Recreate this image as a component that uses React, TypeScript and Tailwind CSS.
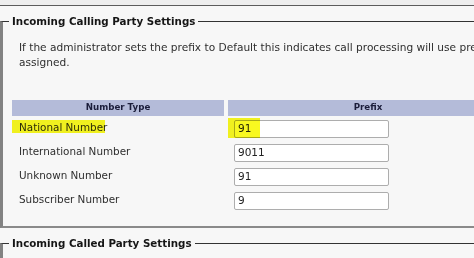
import React from "react";

const rows = [
  { label: "National Number", value: "91" },
  { label: "International Number", value: "9011" },
  { label: "Unknown Number", value: "91" },
  { label: "Subscriber Number", value: "9" },
];

function Legend({ children }: { children: React.ReactNode }) {
  return (
    <div className="absolute left-[6px] top-[-8px] bg-[#f7f7f7] px-[3px] text-[10.3px] font-bold leading-[15px] text-[#151515]">
      {children}
    </div>
  );
}

export default function App() {
  return (
    <div
      className="relative h-[258px] w-[474px] overflow-hidden bg-[#f7f7f7] text-[#2e2e2e]"
      style={{ fontFamily: '"DejaVu Sans", Verdana, sans-serif' }}
    >
      <div className="h-[5px] bg-[#eeeeee]" />
      <div className="h-px bg-[#5c5c5c]" />
      <div className="h-[15px]" />

      <section className="relative w-[560px] border-t border-l-[3px] border-b-2 border-t-[#333333] border-l-[#828282] border-b-[#8a8a8a] pb-[14px]">
        <Legend>Incoming Calling Party Settings</Legend>
        <div className="whitespace-nowrap pl-[16px] pt-[18px] text-[10.6px] leading-[15px]">
          If the administrator sets the prefix to Default this indicates call processing will use prefix
          <br />
          assigned.
        </div>

        <div className="ml-[9px] mt-[30px] flex gap-[4px]">
          <div className="flex h-[16px] w-[212px] items-center justify-center bg-[#b4bbd9] text-[8.7px] font-bold text-[#1b1d3a]">
            Number Type
          </div>
          <div className="flex h-[16px] w-[280px] items-center justify-center bg-[#b4bbd9] text-[8.7px] font-bold text-[#1b1d3a]">
            Prefix
          </div>
        </div>

        <div className="ml-[9px] flex flex-col">
          {rows.map((r) => (
            <div key={r.label} className="flex h-[24px] items-start gap-[4px] pt-[4px]">
              <div className="w-[212px] pl-[7px] text-[10.4px] leading-[15px]">{r.label}</div>
              <div className="w-[280px] pl-[6px]">
                <div className="flex h-[18px] w-[155px] items-center rounded-[2px] border border-[#adadad] bg-white pl-[3px] text-[10.5px] text-[#222]">
                  {r.value}
                </div>
              </div>
            </div>
          ))}
        </div>
      </section>

      <div className="h-[15px]" />
      <section className="relative h-[40px] w-[560px] border-t border-l-[3px] border-t-[#333333] border-l-[#828282]">
        <Legend>Incoming Called Party Settings</Legend>
      </section>

      {/* yellow marker highlights */}
      <div className="pointer-events-none absolute left-[12px] top-[120px] h-[13px] w-[93px] bg-[#f8f820] mix-blend-multiply" />
      <div className="pointer-events-none absolute left-[228px] top-[118px] h-[20px] w-[32px] bg-[#f8f820] mix-blend-multiply" />
    </div>
  );
}
